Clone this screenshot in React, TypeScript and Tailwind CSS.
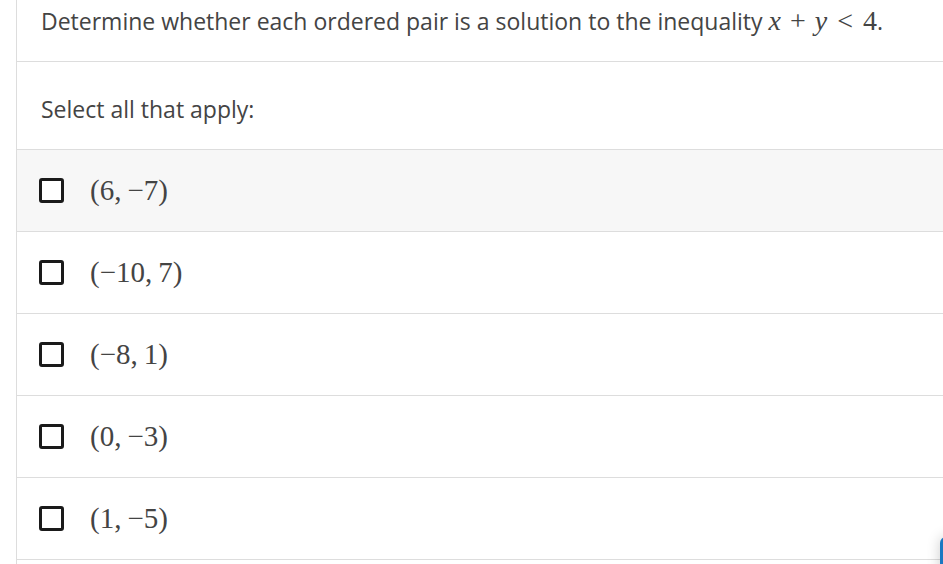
import React from "react";

type Pair = { a: string; b: string };

const pairs: Pair[] = [
  { a: "6", b: "−7" },
  { a: "−10", b: "7" },
  { a: "−8", b: "1" },
  { a: "0", b: "−3" },
  { a: "1", b: "−5" },
];

const sans = "font-['Open_Sans','Noto_Sans',sans-serif]";
const serif = "font-['Liberation_Serif','DejaVu_Serif',serif]";

function PairMath({ pair }: { pair: Pair }) {
  return (
    <span className={`${serif} text-[29px] leading-none text-[#444]`}>
      ({pair.a},<span className="inline-block w-[6px]" />
      {pair.b})
    </span>
  );
}

function ChoiceRow({ pair, hovered }: { pair: Pair; hovered?: boolean }) {
  return (
    <div
      className={`flex h-[82px] items-center border-t border-[#dddddd] pl-[22px] ${
        hovered ? "bg-[#f7f7f7]" : "bg-white"
      }`}
    >
      <span className="h-[25px] w-[25px] shrink-0 rounded-[3px] border-[3px] border-[#1a1a1a] bg-white" />
      <span className="ml-[26px]">
        <PairMath pair={pair} />
      </span>
    </div>
  );
}

export default function App() {
  return (
    <div className="relative min-h-screen overflow-hidden bg-white pl-4">
      <div className="min-h-screen border-l border-[#dddddd]">
        <div className={`h-[61px] pl-6 pt-[5px] ${sans} text-[23px] leading-[32px] text-[#444]`}>
          Determine whether each ordered pair is a solution to the inequality{" "}
          <span className={`${serif} text-[28px] text-[#444]`}>
            <i>x</i>
            <span className="mx-[9px]">+</span>
            <i>y</i>
            <span className="mx-[10px]">&lt;</span>4
          </span>
          .
        </div>
        <div
          className={`h-[88px] border-t border-[#dddddd] pl-6 pt-[31px] ${sans} text-[23px] leading-[32px] text-[#444]`}
        >
          Select all that apply:
        </div>
        {pairs.map((p, i) => (
          <ChoiceRow key={i} pair={p} hovered={i === 0} />
        ))}
        <div className="border-t border-[#dddddd]" />
      </div>
      <div className="absolute left-[940px] top-[537px] h-[60px] w-[40px] rounded-md bg-[#1a78c2] shadow-[0_0_14px_rgba(0,0,0,0.2)]" />
    </div>
  );
}
